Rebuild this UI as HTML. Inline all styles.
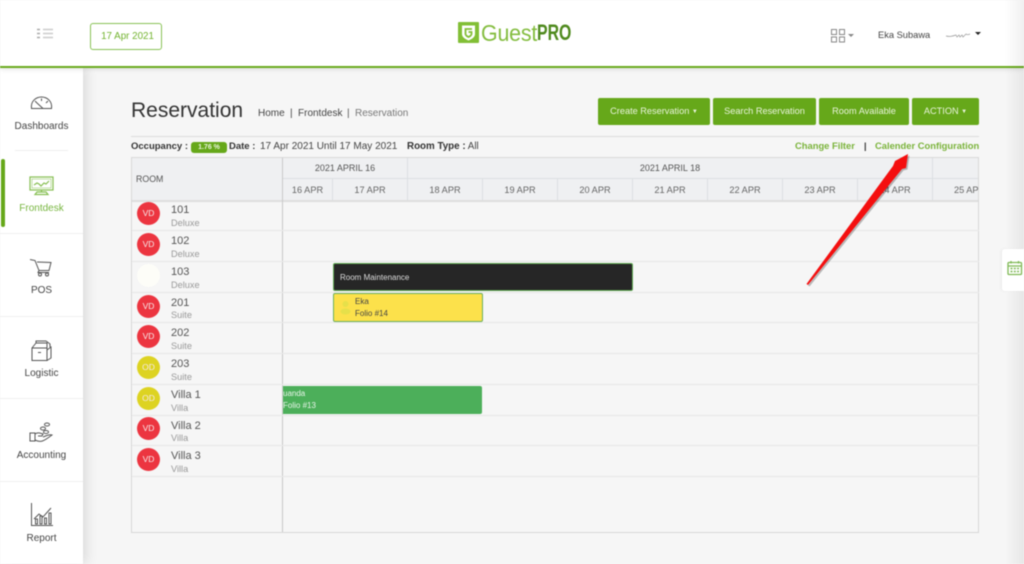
<!DOCTYPE html>
<html><head><meta charset="utf-8">
<style>
html,body{margin:0;padding:0}
body{width:1024px;height:564px;overflow:hidden;background:#f6f6f6;position:relative;font-family:"Liberation Sans",sans-serif;color:#555}
.a{position:absolute;white-space:nowrap}
#wrap{position:absolute;left:0;top:0;width:1024px;height:564px;filter:blur(.4px)}
.nav{position:absolute;left:0;width:83px;text-align:center;font-size:10px;color:#444}
.btn{position:absolute;top:98px;height:27px;background:#66a81a;border-radius:2px;color:#e9f4dc;font-size:9.2px;line-height:27px;text-align:center}
.dh{position:absolute;top:179px;height:21px;line-height:22px;border-right:1px solid #dcdfe2;text-align:center;font-size:9.200px;color:#666;box-sizing:border-box}
.row{position:absolute;left:132px;width:847px;height:1px;background:#e8e8e8}
.c{position:absolute;left:137px;width:23px;height:23px;border-radius:50%;color:#f6e8e8;font-size:8.500px;line-height:23px;text-align:center}
.vd{background:#ec3540}.od{background:#ddd322}
.n{position:absolute;left:171px;font-size:11px;color:#555}
.t{position:absolute;left:171px;font-size:9.200px;color:#999}
.ic{position:absolute;fill:none;stroke:#555;stroke-width:1}
</style></head>
<body>
<div id="wrap">
<!-- sidebar -->
<div class="a" style="left:0;top:66px;width:83px;height:498px;background:#fff;box-shadow:3px 0 12px rgba(0,0,0,.12)"></div>
<!-- header -->
<div class="a" style="left:0;top:0;width:1024px;height:66px;background:#fff;border-bottom:2px solid #6aab1e;box-shadow:0 1px 5px rgba(0,0,0,.12)"></div>
<svg class="a" style="left:36px;top:28px" width="18" height="11"><path d="M1 1.500h3M1 5.500h3M1 9.500h3" stroke="#aaa" stroke-width="1.500"/><path d="M7 1.500h10M7 5.500h10M7 9.500h10" stroke="#ccc" stroke-width="1.500"/></svg>
<div class="a" style="left:90px;top:23px;width:72px;height:27px;border:1px solid #88c255;border-radius:3px;background:#fff;color:#72b32e;font-size:9.800px;line-height:26px;text-align:center;box-sizing:border-box;padding-left:3px">17 Apr 2021</div>
<!-- logo -->
<svg class="a" style="left:458px;top:22px" width="21" height="21"><rect width="21" height="21" rx="1" fill="#82bf36"/><path d="M4 3.500h13v8.500c0 3-3 5-6.500 6.500C7 17 4 15 4 12z" fill="#fff"/><path d="M14 7H7.500v5c0 1 1.500 2.500 3 3 1.500-.5 3-2 3-3v-2h-3" fill="none" stroke="#82bf36" stroke-width="1.800"/></svg>
<div class="a" style="left:481px;top:20px;font-size:23px;line-height:26px;color:#84bd3f;transform-origin:left;transform:scaleX(.93);letter-spacing:-.2px">Guest</div>
<div class="a" style="left:537px;top:20px;font-size:22px;line-height:26px;font-weight:bold;color:#4f8a1e;transform-origin:left;transform:scaleX(.72)">PRO</div>
<!-- header right -->
<svg class="ic" style="left:831px;top:29px;stroke:#888" width="15" height="14"><rect x=".5" y=".5" width="5" height="5"/><rect x="8.500" y=".5" width="5" height="5"/><rect x=".5" y="8" width="5" height="5"/><rect x="8.500" y="8" width="5" height="5"/></svg>
<div class="a" style="left:848px;top:34px;border:3px solid transparent;border-top:3px solid #888"></div>
<div class="a" style="left:878px;top:29px;font-size:9.300px;line-height:12px;color:#444">Eka Subawa</div>
<svg class="a" style="left:945px;top:31px" width="28" height="9"><path d="M1 5c4 1 7 0 10-1l1 2 2-2 1 2 2-2 1 2 3-3c1 1 2 1 4 0" fill="none" stroke="#999" stroke-width=".7"/></svg>
<div class="a" style="left:975px;top:32px;border:3.500px solid transparent;border-top:3.500px solid #222"></div>

<!-- nav -->
<div class="a" style="left:15px;top:150px;width:53px;height:1px;background:#eee"></div>
<div class="a" style="left:0;top:233px;width:83px;height:1px;background:#f0f0f0"></div>
<div class="a" style="left:0;top:316px;width:83px;height:1px;background:#f0f0f0"></div>
<div class="a" style="left:0;top:398px;width:83px;height:1px;background:#f0f0f0"></div>
<div class="a" style="left:0;top:481px;width:83px;height:1px;background:#f0f0f0"></div>
<div class="a" style="left:1px;top:159px;width:4px;height:68px;background:#66a81a;border-radius:2px"></div>

<svg class="ic" style="left:30px;top:96px" width="23" height="14"><path d="M1.500 12.500C.5 5 6 1 11.500 1S22.500 5 21.500 12.500zM5 5l2 2M11.500 2.500V5M18 5l-2 2M7 7l6 5.500"/></svg>
<div class="nav" style="top:121px">Dashboards</div>
<svg class="ic" style="left:29px;top:176px;stroke:#86bf52;stroke-width:1.200" width="26" height="20"><rect x="1" y="1" width="23" height="13"/><rect x="3" y="3" width="19" height="9" stroke-width=".5"/><path d="M5 9l3-2 2 1 2 2 3-3 2 1 3-3M12.500 14v2M6 18.500l2-2.500h9l2 2.500z"/></svg>
<div class="nav" style="top:203px;color:#78b640">Frontdesk</div>
<svg class="ic" style="left:29px;top:258px" width="24" height="19"><path d="M1 1.500l5 1 4 10h10l2-8-14-.5M10 12.500l-1 2h11"/><circle cx="11" cy="16.500" r="1.500"/><circle cx="18" cy="16.500" r="1.500"/></svg>
<div class="nav" style="top:285px">POS</div>
<svg class="ic" style="left:31px;top:338px" width="22" height="24"><path d="M1 10h15v12.500H1zM16 12l4-3v11l-4 2.500M1 10l4-5h11v5M5 5V3h10l4 3v3M7 14.500h3"/></svg>
<div class="nav" style="top:368px">Logistic</div>
<svg class="ic" style="left:29px;top:422px" width="25" height="22"><rect x="1" y="11" width="5" height="8"/><path d="M6 12c3-2 5-1 8 0l-1 2H9M6 18c6 3 9 1 17-5-3-1-6 1-9 2"/><ellipse cx="18" cy="2.500" rx="2.500" ry="1.500"/><ellipse cx="14" cy="6.500" rx="2.500" ry="1.500"/><ellipse cx="17" cy="10" rx="2.500" ry="1.500"/></svg>
<div class="nav" style="top:450px">Accounting</div>
<svg class="ic" style="left:30px;top:503px" width="24" height="24"><path d="M1.500 0v22.500H23M4 16l5-5 4 3 8-9"/><rect x="5.500" y="16" width="2" height="5"/><rect x="10" y="13" width="2" height="8"/><rect x="14.500" y="15" width="2" height="6"/><rect x="19" y="10" width="2" height="11"/></svg>
<div class="nav" style="top:533px">Report</div>

<!-- title -->
<div class="a" style="left:131px;top:97px;font-size:21px;line-height:28px;color:#333">Reservation</div>
<div class="a" style="left:258px;top:107px;font-size:10px;line-height:13px;color:#444">Home</div>
<div class="a" style="left:290px;top:107px;font-size:10px;line-height:13px;color:#444">|</div>
<div class="a" style="left:298px;top:107px;font-size:10px;line-height:13px;color:#444">Frontdesk</div>
<div class="a" style="left:347px;top:107px;font-size:10px;line-height:13px;color:#555">|</div>
<div class="a" style="left:355px;top:107px;font-size:10px;line-height:13px;color:#777">Reservation</div>

<div class="btn" style="left:598px;width:112px">Create Reservation <span style="font-size:6px;vertical-align:1px">▼</span></div>
<div class="btn" style="left:713px;width:103px">Search Reservation</div>
<div class="btn" style="left:819px;width:90px">Room Available</div>
<div class="btn" style="left:912px;width:67px">ACTION <span style="font-size:6px;vertical-align:1px">▼</span></div>

<div class="a" style="left:131px;top:136px;width:848px;height:1px;background:#ddd"></div>
<div class="a" style="left:131px;top:140px;font-size:9.500px;line-height:13px;color:#333"><b>Occupancy :</b></div>
<div class="a" style="left:191px;top:142px;width:36px;height:11px;border-radius:3px;background:#66a81a;color:#e9f4dc;font-size:7px;font-weight:bold;line-height:11px;text-align:center">1.76 %</div>
<div class="a" style="left:229px;top:140px;font-size:9.500px;line-height:13px;color:#333"><b>Date :</b></div>
<div class="a" style="left:260px;top:140px;font-size:10px;line-height:13px;color:#444">17 Apr 2021 Until 17 May 2021</div>
<div class="a" style="left:407px;top:140px;font-size:9.800px;line-height:13px;color:#444"><b style="color:#333">Room Type :</b> All</div>
<div class="a" style="left:795px;top:140px;font-size:9.400px;line-height:12px;font-weight:bold;color:#7ab33a">Change Filter</div>
<div class="a" style="left:864px;top:140px;font-size:9px;line-height:12px;font-weight:bold;color:#333">|</div>
<div class="a" style="left:875px;top:140px;font-size:9.400px;line-height:12px;font-weight:bold;color:#7ab33a">Calender Configuration</div>

<!-- table -->
<div class="a" style="left:131px;top:157px;width:848px;height:376px;border:1px solid #d8d8d8;box-sizing:border-box"></div>
<div class="a" style="left:132px;top:158px;width:846px;height:42px;background:#eff0f2;border-bottom:2px solid #dedede"></div>
<div class="a" style="left:282px;top:158px;width:1px;height:374px;background:#c9c9c9"></div>
<div class="a" style="left:283px;top:178px;width:695px;height:1px;background:#dcdfe2"></div>
<div class="a" style="left:136px;top:173px;font-size:8.800px;line-height:12px;color:#555">ROOM</div>
<div class="a" style="left:283px;top:158px;width:125px;height:20px;line-height:21px;text-align:center;font-size:9px;color:#555;border-right:1px solid #dcdfe2;box-sizing:border-box">2021 APRIL 16</div>
<div class="a" style="left:408px;top:158px;width:525px;height:20px;line-height:21px;text-align:center;font-size:9px;color:#555;border-right:1px solid #dcdfe2;box-sizing:border-box">2021 APRIL 18</div>
<div class="dh" style="left:283px;width:50px">16 APR</div>
<div class="dh" style="left:333px;width:75px">17 APR</div>
<div class="dh" style="left:408px;width:75px">18 APR</div>
<div class="dh" style="left:483px;width:75px">19 APR</div>
<div class="dh" style="left:558px;width:75px">20 APR</div>
<div class="dh" style="left:633px;width:75px">21 APR</div>
<div class="dh" style="left:708px;width:75px">22 APR</div>
<div class="dh" style="left:783px;width:75px">23 APR</div>
<div class="dh" style="left:858px;width:75px">24 APR</div>
<div class="a" style="left:954px;top:179px;line-height:22px;font-size:9.200px;color:#666;width:24px;overflow:hidden">25 APR</div>

<div class="row" style="top:230px"></div>
<div class="row" style="top:261px"></div>
<div class="row" style="top:292px"></div>
<div class="row" style="top:322px"></div>
<div class="row" style="top:353px"></div>
<div class="row" style="top:384px"></div>
<div class="row" style="top:415px"></div>
<div class="row" style="top:445px"></div>
<div class="row" style="top:476px"></div>

<div class="c vd" style="top:202px">VD</div><div class="n" style="top:204px">101</div><div class="t" style="top:218px">Deluxe</div>
<div class="c vd" style="top:233px">VD</div><div class="n" style="top:235px">102</div><div class="t" style="top:249px">Deluxe</div>
<div class="c" style="top:264px;background:#fdfdf8"></div><div class="n" style="top:266px">103</div><div class="t" style="top:280px">Deluxe</div>
<div class="c vd" style="top:295px">VD</div><div class="n" style="top:297px">201</div><div class="t" style="top:310px">Suite</div>
<div class="c vd" style="top:325px">VD</div><div class="n" style="top:327px">202</div><div class="t" style="top:341px">Suite</div>
<div class="c od" style="top:356px">OD</div><div class="n" style="top:358px">203</div><div class="t" style="top:372px">Suite</div>
<div class="c od" style="top:387px">OD</div><div class="n" style="top:389px">Villa 1</div><div class="t" style="top:403px">Villa</div>
<div class="c vd" style="top:417px">VD</div><div class="n" style="top:420px">Villa 2</div><div class="t" style="top:433px">Villa</div>
<div class="c vd" style="top:448px">VD</div><div class="n" style="top:450px">Villa 3</div><div class="t" style="top:464px">Villa</div>

<!-- bookings -->
<div class="a" style="left:333px;top:263px;width:300px;height:28px;background:#262626;border:1px solid #5da84f;border-radius:2px;box-sizing:border-box;color:#ddd;font-size:8px;line-height:27px;padding-left:6px">Room Maintenance</div>
<div class="a" style="left:333px;top:293px;width:150px;height:29px;background:#fce14b;border:1px solid #6cb05c;border-radius:2px;box-sizing:border-box"></div>
<svg class="a" style="left:339px;top:300px" width="13" height="15"><circle cx="6.500" cy="4" r="3" fill="#e6e04a"/><ellipse cx="6.500" cy="11.500" rx="5" ry="3" fill="#e6e04a"/></svg>
<div class="a" style="left:355px;top:296px;font-size:8px;line-height:12px;color:#444">Eka<br>Folio #14</div>
<div class="a" style="left:283px;top:386px;width:199px;height:28px;background:#4caf5a;border-radius:0 2px 2px 0"></div>
<div class="a" style="left:283px;top:388px;width:60px;overflow:hidden;font-size:8px;line-height:12px;color:#e8f5e9"><div>uanda</div><div>Folio #13</div></div>

<!-- right edge shade -->
<div class="a" style="left:1005px;top:0;width:19px;height:564px;background:linear-gradient(to right,rgba(0,0,0,0),rgba(0,0,0,.06))"></div>
<!-- side tab -->
<div class="a" style="left:1002px;top:249px;width:22px;height:42px;background:#fff;border-radius:3px 0 0 3px;box-shadow:-1px 0 3px rgba(0,0,0,.05)"></div>
<svg class="a" style="left:1007px;top:260px" width="16" height="16" fill="none" stroke="#7fb955" stroke-width="1.300"><rect x="1" y="2.500" width="13.500" height="12" rx="1"/><path d="M1 6h13.500M4 1v2.500M11.500 1v2.500"/><path d="M3.500 8.500h8.500M3.500 11.500h8.500" stroke-dasharray="2 1.300" stroke-width="1.500"/></svg>

<!-- arrow -->
<svg class="a" style="left:0;top:0" width="1024" height="564">
<path d="M806.500 284L893 166L895 161L908 154L906 168L902 169L808 285Z" fill="#000" opacity=".25" transform="translate(1.500 1.500)"/>
<path d="M806.500 284L893 166L895 161L908 154L906 168L902 169L808 285Z" fill="#f40f0f"/>
</svg>
</div>
</body></html>
